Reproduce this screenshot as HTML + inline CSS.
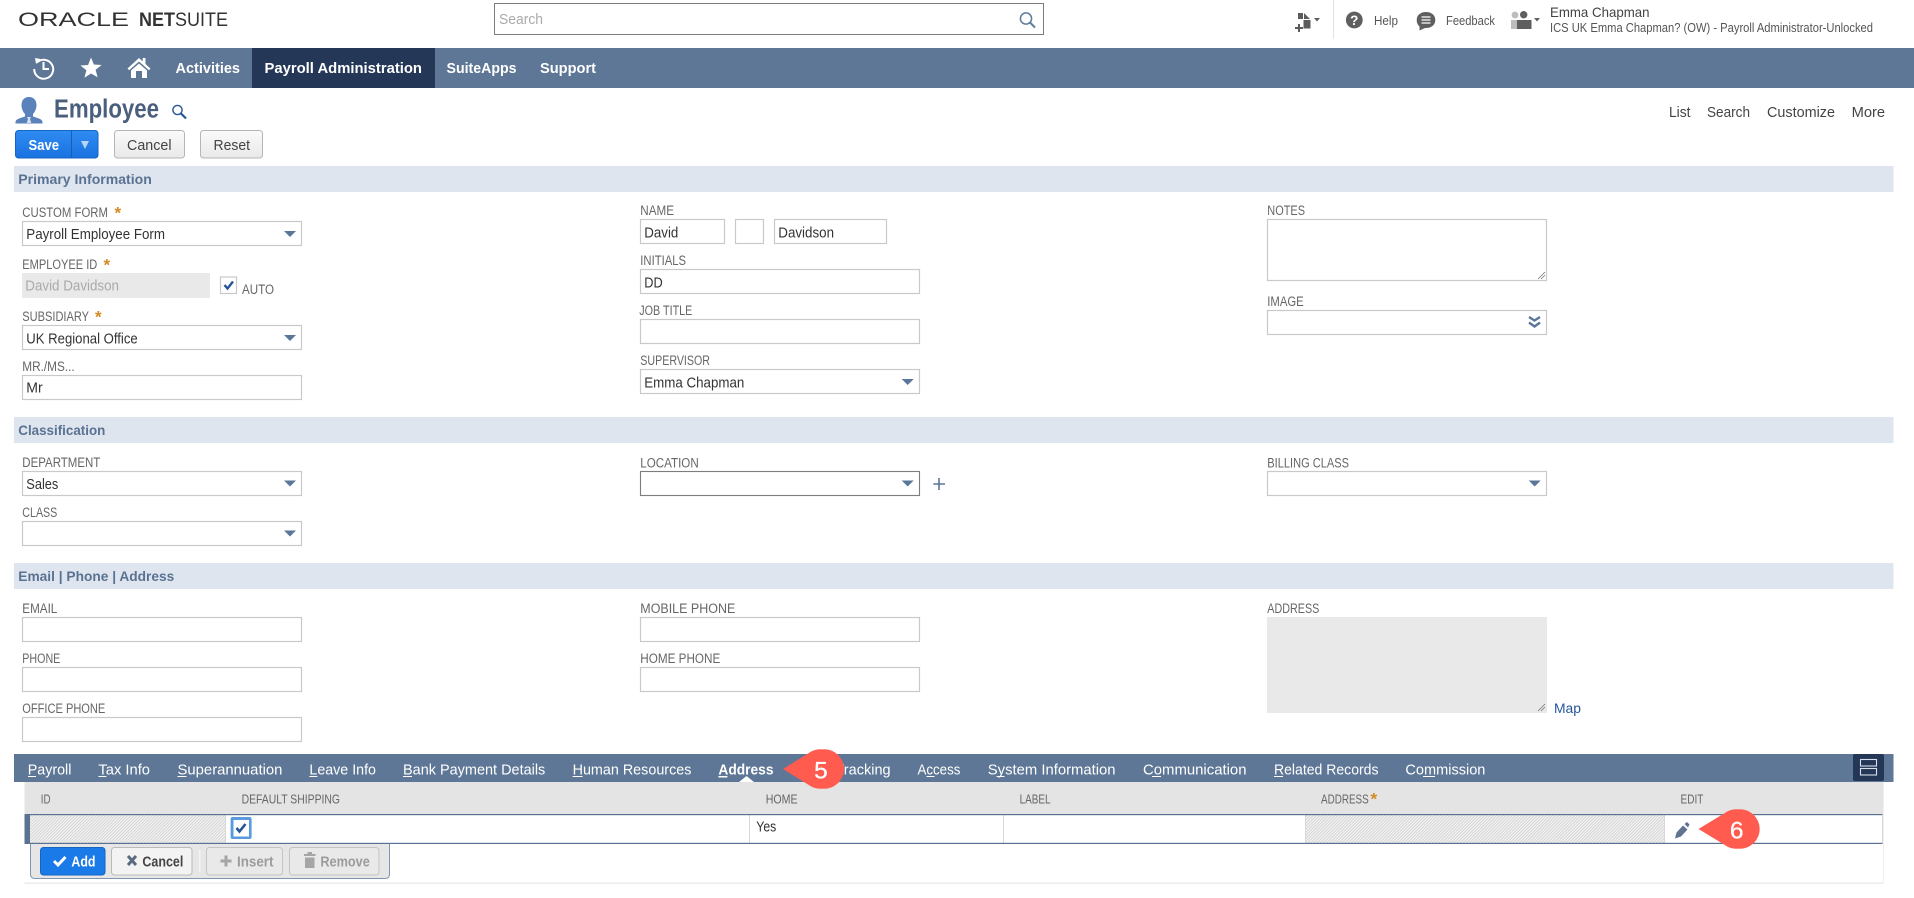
<!DOCTYPE html>
<html lang="en"><head><meta charset="utf-8"><title>Employee - NetSuite</title>
<style>
html,body{margin:0;padding:0;background:#fff;width:1914px;height:898px;overflow:hidden}
svg{display:block}
text{font-family:"Liberation Sans",Arial,sans-serif;white-space:pre}
.lab{font-size:13.5px;fill:#666}
.val{font-size:14.5px;fill:#333}
.sec{font-size:14px;font-weight:700;fill:#5a7292}
.nav{font-size:15px;font-weight:700;fill:#fff}
.tab{font-size:15px;fill:#fff}
.th{font-size:12.5px;fill:#666}
.top{font-size:12.5px;fill:#555}
.lnk{font-size:15px;fill:#444}
.box{fill:#fff;stroke:#c9c9c9;stroke-width:1.2}
.arr{fill:#5a7698}
.star{font-size:17px;fill:#d38a24;font-weight:700}
</style></head><body>
<svg xmlns="http://www.w3.org/2000/svg" width="1914" height="898" viewBox="0 0 1914 898">
<defs>
<pattern id="h" width="2.2" height="2.2" patternUnits="userSpaceOnUse" patternTransform="rotate(45)"><rect width="2.2" height="2.2" fill="#f4f4f4"/><rect width="1" height="2.2" fill="#d4d4d4"/></pattern>
<linearGradient id="blue" x1="0" y1="0" x2="0" y2="1"><stop offset="0" stop-color="#2f8cf2"/><stop offset="1" stop-color="#1a72e0"/></linearGradient>
<linearGradient id="gb" x1="0" y1="0" x2="0" y2="1"><stop offset="0" stop-color="#fafafa"/><stop offset="1" stop-color="#e9e9e9"/></linearGradient>
</defs>

<!-- header -->
<text x="18" y="26" font-size="19" fill="#333" textLength="111" lengthAdjust="spacingAndGlyphs">ORACLE</text>
<text x="139" y="26" font-size="19" fill="#333" textLength="89" lengthAdjust="spacingAndGlyphs"><tspan font-weight="700">NET</tspan>SUITE</text>
<rect x="494.500" y="3.500" width="549" height="31" fill="#fff" stroke="#7c7c7c" stroke-width="1"/>
<text x="499" y="24" font-size="14.500" fill="#aaa" textLength="44" lengthAdjust="spacingAndGlyphs">Search</text>
<g fill="none" stroke="#5f7c9c" stroke-width="1.500"><circle cx="1026" cy="18.500" r="5.600"/><path d="M1030 22.500l5 5" stroke-width="2"/></g>

<g fill="#5c5c5c">
<path d="M1298 13h5v6h-5z"/><path d="M1304 13l6 6h-6z"/><path d="M1303.500 20h7v8.500h-7z"/>
<path d="M1298 24h2v3h3v2h-3v3h-2v-3h-3v-2h3z"/>
<path d="M1314 18h6l-3 3.500z"/>
</g>
<rect x="1333" y="0" width="1" height="39" fill="#e2e2e2"/>
<circle cx="1354.300" cy="20" r="8.400" fill="#5f5f5f"/>
<text x="1354.300" y="25" font-size="13.500" font-weight="700" fill="#fff" text-anchor="middle">?</text>
<text x="1374" y="25" class="top" textLength="24" lengthAdjust="spacingAndGlyphs">Help</text>
<path d="M1416.700 20c0-5 4-8 9.300-8s9.300 3 9.300 8-4 8-9.300 8l-1 0-5.500 2.500v-4c-1.800-1.500-2.800-3.800-2.800-6.500z" fill="#5f5f5f"/>
<path d="M1421.500 17h9M1421.500 20h9M1421.500 23h9" stroke="#fff" stroke-width="1.200"/>
<text x="1446" y="25" class="top" textLength="49" lengthAdjust="spacingAndGlyphs">Feedback</text>
<g fill="#bdbdbd"><circle cx="1515" cy="15" r="3.400"/><rect x="1511" y="20" width="6" height="9"/></g>
<g fill="#5f5f5f"><circle cx="1523.700" cy="14.700" r="3.700"/><path d="M1517 20h14.500v9h-14.500z"/><path d="M1534 18h6l-3 3.500z"/></g>
<text x="1550" y="17" font-size="14" fill="#444" textLength="99.500" lengthAdjust="spacingAndGlyphs">Emma Chapman</text>
<text x="1550" y="32" font-size="12.500" fill="#555" textLength="323" lengthAdjust="spacingAndGlyphs">ICS UK Emma Chapman? (OW) - Payroll Administrator-Unlocked</text>

<!-- nav -->
<rect x="0" y="48" width="1914" height="40" fill="#5e7796"/>
<rect x="252" y="48" width="183" height="40" fill="#243757"/>
<g fill="none" stroke="#fff" stroke-width="2">
<path d="M37 62.500a9.500 9.500 0 1 1 -2.800 6.500"/><path d="M43.500 62v7h5.500"/>
</g>
<path d="M35 58l5.500 1-4.500 5z" fill="#fff"/>
<path d="M91 57.500l2.900 7 7.700.5-6 4.800 2 7.400L91 73.500l-6.600 4.200 2-7.400-6-4.800 7.700-.5z" fill="#fff"/>
<path d="M139 58l-11.500 10.500 1.600 1.800L139 61.500l9.900 8.800 1.600-1.800-5-4.500V58h-2.800v3.500zM131 70.500V78h16v-7.500L139 63.500z" fill="#fff"/>
<rect x="136" y="71" width="6" height="7" fill="#5e7796"/>
<text class="nav" x="175.500" y="73" textLength="64.500" lengthAdjust="spacingAndGlyphs">Activities</text>
<text class="nav" x="264.500" y="73" textLength="157.500" lengthAdjust="spacingAndGlyphs">Payroll Administration</text>
<text class="nav" x="446.500" y="73" textLength="70" lengthAdjust="spacingAndGlyphs">SuiteApps</text>
<text class="nav" x="540" y="73" textLength="56" lengthAdjust="spacingAndGlyphs">Support</text>

<!-- title -->
<path d="M29 97c-5 0-7.500 3.500-7.500 8 0 3.500 1.500 7 3.500 9v2.500c-4.500 1.500-9.500 2.500-9.500 5.500v1.500h27V122c0-3-5-4-9.500-5.500V114c2-2 3.500-5.500 3.500-9 0-4.500-2.500-8-7.500-8z" fill="#5b82bb"/>
<path d="M27 117h4l-1 2 1.200 4h-4.400l1.200-4z" fill="#d8e2f0"/>
<text x="54" y="117.500" font-size="25.500" font-weight="700" fill="#4a5f7d" textLength="105" lengthAdjust="spacingAndGlyphs">Employee</text>
<g fill="none" stroke="#255599"><circle cx="177.500" cy="110" r="4.600" stroke-width="1.400"/><path d="M181 113.500l5 5" stroke-width="2.200"/></g>
<text class="lnk" x="1669" y="117" textLength="21.500" lengthAdjust="spacingAndGlyphs">List</text>
<text class="lnk" x="1707" y="117" textLength="43" lengthAdjust="spacingAndGlyphs">Search</text>
<text class="lnk" x="1767" y="117" textLength="68" lengthAdjust="spacingAndGlyphs">Customize</text>
<text class="lnk" x="1851.600" y="117" textLength="33.500" lengthAdjust="spacingAndGlyphs">More</text>

<!-- buttons -->
<rect x="15.500" y="130.500" width="82.500" height="27.500" rx="3" fill="url(#blue)" stroke="#1565c0"/>
<rect x="71" y="131" width="1" height="27" fill="#155fb8"/>
<text x="28.500" y="150" font-size="15" font-weight="700" fill="#fff" textLength="30.500" lengthAdjust="spacingAndGlyphs">Save</text>
<path d="M81 141h8l-4 8z" fill="#b9d3f2"/>
<rect x="114.500" y="130.500" width="70" height="27.500" rx="3" fill="url(#gb)" stroke="#b5b5b5"/>
<text x="127" y="150" font-size="15" fill="#444" textLength="44.500" lengthAdjust="spacingAndGlyphs">Cancel</text>
<rect x="200.500" y="130.500" width="62" height="27.500" rx="3" fill="url(#gb)" stroke="#b5b5b5"/>
<text x="213.500" y="150" font-size="15" fill="#444" textLength="36.500" lengthAdjust="spacingAndGlyphs">Reset</text>

<!-- bands -->
<g fill="#dfe5ef"><rect x="14" y="166" width="1879.500" height="26"/><rect x="14" y="417" width="1879.500" height="26"/><rect x="14" y="563" width="1879.500" height="26"/></g>
<text class="sec" x="18.300" y="184" textLength="133.500" lengthAdjust="spacingAndGlyphs">Primary Information</text>
<text class="sec" x="18.300" y="435" textLength="87" lengthAdjust="spacingAndGlyphs">Classification</text>
<text class="sec" x="18.300" y="581" textLength="156" lengthAdjust="spacingAndGlyphs">Email | Phone | Address</text>

<!-- column 1 -->
<text class="lab" x="22.300" y="217" textLength="85.700" lengthAdjust="spacingAndGlyphs">CUSTOM FORM</text><text class="star" x="114.500" y="218.500">*</text>
<rect class="box" x="22.500" y="221.500" width="279" height="24"/>
<text class="val" x="26.300" y="239" textLength="138.700" lengthAdjust="spacingAndGlyphs">Payroll Employee Form</text>
<path class="arr" d="M284 231h12l-6 6z"/>
<text class="lab" x="22.300" y="269" textLength="75" lengthAdjust="spacingAndGlyphs">EMPLOYEE ID</text><text class="star" x="103.500" y="270.500">*</text>
<rect x="22" y="273" width="188" height="25" fill="#e9e9e9"/>
<text class="val" x="25.300" y="290.700" style="fill:#aaa" textLength="93.700" lengthAdjust="spacingAndGlyphs">David Davidson</text>
<rect class="box" x="220.500" y="277" width="16" height="16.500"/>
<path d="M224.500 285l3 3.500 5.500-7" fill="none" stroke="#255599" stroke-width="2.400"/>
<text class="lab" x="242" y="294" textLength="32" lengthAdjust="spacingAndGlyphs">AUTO</text>
<text class="lab" x="22.300" y="321" textLength="66.700" lengthAdjust="spacingAndGlyphs">SUBSIDIARY</text><text class="star" x="95" y="322.500">*</text>
<rect class="box" x="22.500" y="325.500" width="279" height="24"/>
<text class="val" x="26.300" y="343.300" textLength="111.400" lengthAdjust="spacingAndGlyphs">UK Regional Office</text>
<path class="arr" d="M284 335h12l-6 6z"/>
<text class="lab" x="22.300" y="371" textLength="52.400" lengthAdjust="spacingAndGlyphs">MR./MS...</text>
<rect class="box" x="22.500" y="375.500" width="279" height="24"/>
<text class="val" x="26.300" y="392.700" textLength="16.400" lengthAdjust="spacingAndGlyphs">Mr</text>

<text class="lab" x="22.300" y="467" textLength="78" lengthAdjust="spacingAndGlyphs">DEPARTMENT</text>
<rect class="box" x="22.500" y="471.500" width="279" height="24"/>
<text class="val" x="26.300" y="489" textLength="32" lengthAdjust="spacingAndGlyphs">Sales</text>
<path class="arr" d="M284 480.500h12l-6 6z"/>
<text class="lab" x="22.300" y="517" textLength="35" lengthAdjust="spacingAndGlyphs">CLASS</text>
<rect class="box" x="22.500" y="521.500" width="279" height="24"/>
<path class="arr" d="M284 530.500h12l-6 6z"/>

<text class="lab" x="22.300" y="613" textLength="35" lengthAdjust="spacingAndGlyphs">EMAIL</text>
<rect class="box" x="22.500" y="617.500" width="279" height="24"/>
<text class="lab" x="22.300" y="663" textLength="38" lengthAdjust="spacingAndGlyphs">PHONE</text>
<rect class="box" x="22.500" y="667.500" width="279" height="24"/>
<text class="lab" x="22.300" y="713" textLength="83" lengthAdjust="spacingAndGlyphs">OFFICE PHONE</text>
<rect class="box" x="22.500" y="717.500" width="279" height="24"/>

<!-- column 2 -->
<text class="lab" x="640.300" y="215" textLength="33.700" lengthAdjust="spacingAndGlyphs">NAME</text>
<rect class="box" x="640.500" y="219.500" width="84" height="24"/><rect class="box" x="735.500" y="219.500" width="28" height="24"/><rect class="box" x="774.500" y="219.500" width="112" height="24"/>
<text class="val" x="644.300" y="237.300" textLength="34" lengthAdjust="spacingAndGlyphs">David</text>
<text class="val" x="778.300" y="237.300" textLength="55.700" lengthAdjust="spacingAndGlyphs">Davidson</text>
<text class="lab" x="640.300" y="265" textLength="45.700" lengthAdjust="spacingAndGlyphs">INITIALS</text>
<rect class="box" x="640.500" y="269.500" width="279" height="24"/>
<text class="val" x="644.300" y="287.300" textLength="18.400" lengthAdjust="spacingAndGlyphs">DD</text>
<text class="lab" x="639.300" y="315" textLength="53" lengthAdjust="spacingAndGlyphs">JOB TITLE</text>
<rect class="box" x="640.500" y="319.500" width="279" height="24"/>
<text class="lab" x="640.300" y="365" textLength="69.700" lengthAdjust="spacingAndGlyphs">SUPERVISOR</text>
<rect class="box" x="640.500" y="369.500" width="279" height="24"/>
<text class="val" x="644.300" y="387.300" textLength="100" lengthAdjust="spacingAndGlyphs">Emma Chapman</text>
<path class="arr" d="M901.700 379h12l-6 6z"/>

<text class="lab" x="640.300" y="467.300" textLength="58.400" lengthAdjust="spacingAndGlyphs">LOCATION</text>
<rect x="640.500" y="471.500" width="279" height="24" fill="#fff" stroke="#7d7d7d" stroke-width="1.100"/>
<path class="arr" d="M901.700 480.500h12l-6 6z"/>
<path d="M939 478v12M933.300 484h11.700" stroke="#5a7698" stroke-width="1.600"/>

<text class="lab" x="640.300" y="613" textLength="95" lengthAdjust="spacingAndGlyphs">MOBILE PHONE</text>
<rect class="box" x="640.500" y="617.500" width="279" height="24"/>
<text class="lab" x="640.300" y="663" textLength="80" lengthAdjust="spacingAndGlyphs">HOME PHONE</text>
<rect class="box" x="640.500" y="667.500" width="279" height="24"/>

<!-- column 3 -->
<text class="lab" x="1267.300" y="215" textLength="37.700" lengthAdjust="spacingAndGlyphs">NOTES</text>
<rect class="box" x="1267.500" y="219.500" width="279" height="61"/>
<path d="M1538 279l7-7M1541 279l4-4" stroke="#777" stroke-width=".8" fill="none"/>
<text class="lab" x="1267.300" y="306" textLength="36.400" lengthAdjust="spacingAndGlyphs">IMAGE</text>
<rect class="box" x="1267.500" y="310.500" width="279" height="24"/>
<path d="M1529 317l5.500 3.500 5.500-3.500M1529 322.500l5.500 4 5.500-4" fill="none" stroke="#5a7698" stroke-width="2.400"/>
<text class="lab" x="1267.300" y="467.300" textLength="81.700" lengthAdjust="spacingAndGlyphs">BILLING CLASS</text>
<rect class="box" x="1267.500" y="471.500" width="279" height="24"/>
<path class="arr" d="M1528.700 480.500h12l-6 6z"/>
<text class="lab" x="1267.300" y="613" textLength="52" lengthAdjust="spacingAndGlyphs">ADDRESS</text>
<rect x="1267" y="617" width="280" height="96" fill="#e9e9e9"/>
<path d="M1538 711l7-7M1541 711l4-4" stroke="#777" stroke-width=".8" fill="none"/>
<text x="1554" y="713" font-size="13.500" fill="#255599" textLength="27" lengthAdjust="spacingAndGlyphs">Map</text>

<!-- tabs -->
<rect x="14" y="754" width="1879.500" height="28" fill="#5e7796"/>
<text class="tab" x="27.800" y="774.300" textLength="43.600" lengthAdjust="spacingAndGlyphs">Payroll</text>
<text class="tab" x="98.400" y="774.300" textLength="51.600" lengthAdjust="spacingAndGlyphs">Tax Info</text>
<text class="tab" x="177.500" y="774.300" textLength="104.900" lengthAdjust="spacingAndGlyphs">Superannuation</text>
<text class="tab" x="309.400" y="774.300" textLength="66.600" lengthAdjust="spacingAndGlyphs">Leave Info</text>
<text class="tab" x="403" y="774.300" textLength="142.300" lengthAdjust="spacingAndGlyphs">Bank Payment Details</text>
<text class="tab" x="572.600" y="774.300" textLength="118.800" lengthAdjust="spacingAndGlyphs">Human Resources</text>
<text class="tab" x="718.400" y="774.300" font-weight="700" textLength="55.100" lengthAdjust="spacingAndGlyphs">Address</text>
<text class="tab" x="800" y="774.300" textLength="90.600" lengthAdjust="spacingAndGlyphs">Time Tracking</text>
<text class="tab" x="917.500" y="774.300" textLength="42.900" lengthAdjust="spacingAndGlyphs">Access</text>
<text class="tab" x="987.800" y="774.300" textLength="127.700" lengthAdjust="spacingAndGlyphs">System Information</text>
<text class="tab" x="1143" y="774.300" textLength="103.500" lengthAdjust="spacingAndGlyphs">Communication</text>
<text class="tab" x="1274" y="774.300" textLength="104.500" lengthAdjust="spacingAndGlyphs">Related Records</text>
<text class="tab" x="1405.400" y="774.300" textLength="80" lengthAdjust="spacingAndGlyphs">Commission</text>
<g fill="#fff">
<rect x="28" y="776" width="8" height="1"/><rect x="98.400" y="776" width="8" height="1"/><rect x="177.500" y="776" width="9" height="1"/><rect x="309.400" y="776" width="8" height="1"/><rect x="403" y="776" width="9" height="1"/><rect x="572.600" y="776" width="10" height="1"/><rect x="718.400" y="776" width="9" height="1.500"/><rect x="926.500" y="776" width="8" height="1"/><rect x="996.500" y="776" width="8" height="1"/><rect x="1152" y="776" width="9" height="1"/><rect x="1274" y="776" width="9" height="1"/><rect x="1423" y="776" width="12" height="1"/>
<path d="M739 782l7.500-6 7.500 6z"/>
</g>
<rect x="1853" y="754" width="31" height="27" rx="2" fill="#243757"/>
<g fill="none" stroke="#d6dfeb" stroke-width="1.100"><rect x="1860.500" y="759.500" width="16" height="6.500"/><rect x="1860.500" y="768.500" width="16" height="6.500"/></g>

<!-- table -->
<rect x="24.500" y="782" width="1858.500" height="32" fill="#e4e4e4"/>
<text class="th" x="40.800" y="803.300" textLength="9.800" lengthAdjust="spacingAndGlyphs">ID</text>
<text class="th" x="241.600" y="803.300" textLength="98.400" lengthAdjust="spacingAndGlyphs">DEFAULT SHIPPING</text>
<text class="th" x="765.700" y="803.300" textLength="31.900" lengthAdjust="spacingAndGlyphs">HOME</text>
<text class="th" x="1019.600" y="803.300" textLength="31" lengthAdjust="spacingAndGlyphs">LABEL</text>
<text class="th" x="1321" y="803.300" textLength="47.700" lengthAdjust="spacingAndGlyphs">ADDRESS</text>
<text class="star" x="1370.500" y="804.500">*</text>
<text class="th" x="1680.500" y="803.300" textLength="22.900" lengthAdjust="spacingAndGlyphs">EDIT</text>

<rect x="30" y="815" width="195" height="28" fill="url(#h)"/>
<rect x="1306" y="815" width="358" height="28" fill="url(#h)"/>
<g fill="#d8d8d8"><rect x="225" y="815" width="1" height="28"/><rect x="749" y="815" width="1" height="28"/><rect x="1003" y="815" width="1" height="28"/><rect x="1305" y="815" width="1" height="28"/><rect x="1664" y="815" width="1" height="28"/><rect x="1882" y="815" width="1" height="28"/></g>
<rect x="24.500" y="814" width="1858" height="1.200" fill="#5a7292"/>
<rect x="24.500" y="842.800" width="1858" height="1.200" fill="#5a7292"/>
<rect x="24.500" y="814" width="5.500" height="30" fill="#5a7292"/>

<rect x="230.600" y="817" width="21" height="22" rx="2" fill="#5a9be0"/>
<rect x="233.500" y="820" width="15.500" height="16.500" fill="#fff"/>
<path d="M236.500 828l3 3.500 6-7.500" fill="none" stroke="#255599" stroke-width="2.600"/>
<text class="val" x="756.300" y="831.700" textLength="20" lengthAdjust="spacingAndGlyphs">Yes</text>
<path d="M1675 838.500l1.500-6 6.500-7 4.500 4-6.500 7z" fill="#5f7391"/>
<path d="M1684.500 824l2.500-2 2.500 2.500-1.500 3z" fill="#5f7391"/>

<!-- bottom panel -->
<rect x="24.500" y="882.500" width="1859" height="1.300" fill="#e8e8e8"/>
<rect x="1883" y="782" width="1" height="101" fill="#efefef"/>
<path d="M30.500 844v30a4 4 0 0 0 4 4.500h351a4 4 0 0 0 4-4.500v-30" fill="#e6e6e6" stroke="#7f95b0" stroke-width="1"/>
<rect x="40.500" y="847.500" width="64.500" height="27.500" rx="3" fill="#1a7ae8" stroke="#1565c0"/>
<path d="M54 861l4 4 7.500-8" fill="none" stroke="#fff" stroke-width="3"/>
<text x="71.400" y="866.700" font-size="14.500" font-weight="700" fill="#fff" textLength="24.100" lengthAdjust="spacingAndGlyphs">Add</text>
<rect x="111.500" y="847.500" width="80.500" height="27.500" rx="3" fill="#f3f3f3" stroke="#bbb"/>
<path d="M128 856l8 9M136 856l-8 9" stroke="#5a6b80" stroke-width="3"/>
<text x="142.400" y="866.700" font-size="14.500" font-weight="700" fill="#444" textLength="40.900" lengthAdjust="spacingAndGlyphs">Cancel</text>
<rect x="199.300" y="850" width="1" height="22" fill="#fafafa"/>
<rect x="206.500" y="847.500" width="76" height="27.500" rx="3" fill="#e9e9e9" stroke="#c4c4c4"/>
<path d="M226 855.500v11M220.500 861h11" stroke="#a5a5a5" stroke-width="3"/>
<text x="237" y="866.700" font-size="14.500" font-weight="700" fill="#9b9b9b" textLength="36.500" lengthAdjust="spacingAndGlyphs">Insert</text>
<rect x="289.500" y="847.500" width="89.500" height="27.500" rx="3" fill="#e9e9e9" stroke="#c4c4c4"/>
<path d="M304 854h11.500v2H304zM307.500 852h4.500v2h-4.500zM305 857.500h9.500v10.500H305z" fill="#a5a5a5"/>
<text x="320.400" y="866.700" font-size="14.500" font-weight="700" fill="#9b9b9b" textLength="49.400" lengthAdjust="spacingAndGlyphs">Remove</text>

<!-- callouts -->
<path d="M783 769L808 753.500A19.700 19.700 0 1 1 808 784.500Z" fill="#ff5b4f"/>
<circle cx="824.300" cy="769" r="19.700" fill="#ff5b4f"/>
<text x="821" y="778.400" font-size="24.500" fill="#fff" stroke="#fff" stroke-width=".3" text-anchor="middle">5</text>
<path d="M1698.500 829L1724 813.500A19.700 19.700 0 1 1 1724 844.500Z" fill="#ff5b4f"/>
<circle cx="1740" cy="829" r="19.700" fill="#ff5b4f"/>
<text x="1736.700" y="838.400" font-size="24.500" fill="#fff" stroke="#fff" stroke-width=".3" text-anchor="middle">6</text>
</svg>
</body></html>
